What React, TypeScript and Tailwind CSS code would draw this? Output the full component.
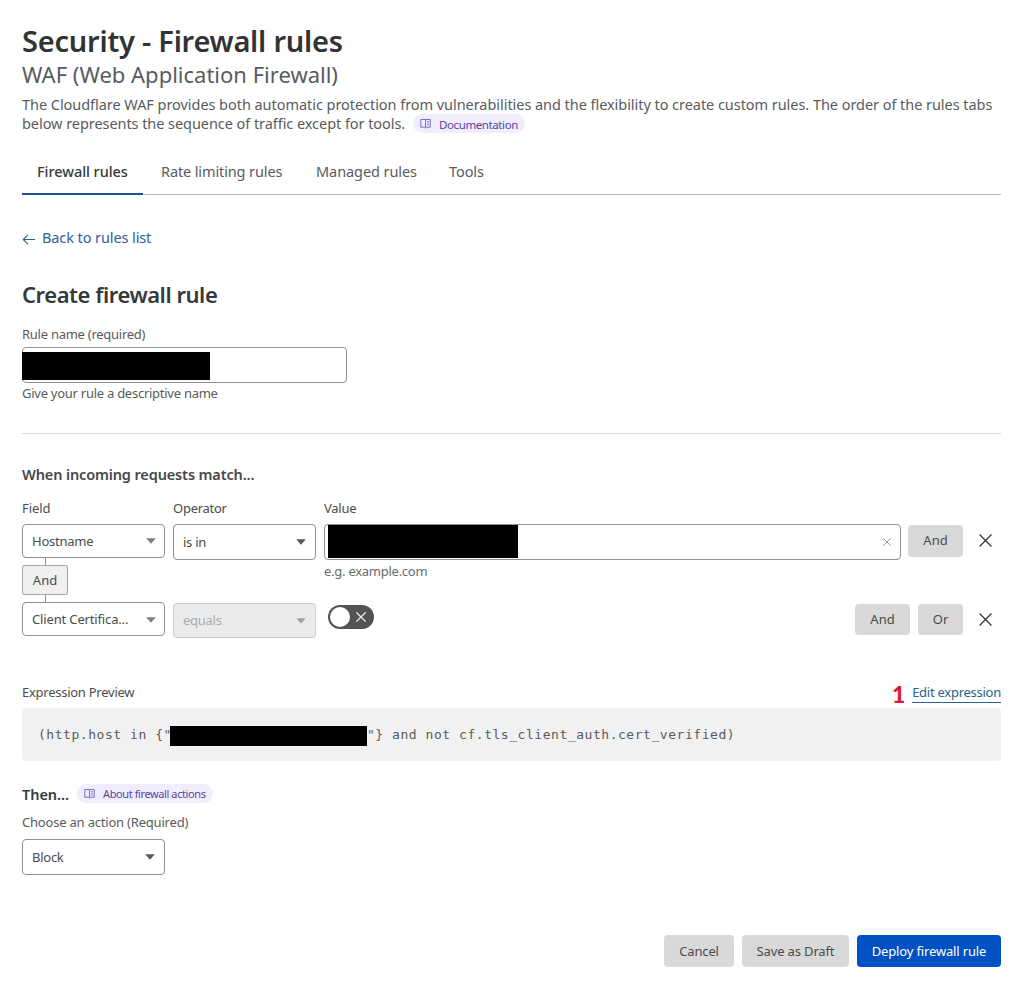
import type { ReactNode } from 'react';

const tabs = [
  { label: 'Firewall rules', active: true, className: 'w-[121px] pl-[15px] tracking-[-0.05px]' },
  { label: 'Rate limiting rules', active: false, className: 'w-[156px] pl-[18px] tracking-[-0.12px]' },
  { label: 'Managed rules', active: false, className: 'w-[132px] pl-[17px] tracking-[-0.08px]' },
  { label: 'Tools', active: false, className: 'pl-[18px] tracking-[-0.08px]' },
];

function BookIcon() {
  return (
    <svg width="11" height="11" viewBox="0 0 11 11" fill="none" stroke="#7a6bd0" strokeWidth="1" className="shrink-0">
      <path d="M5.5 1.5H.8v7.7h3.4l1.3.9 1.3-.9h3.4V1.5H5.5zM5.5 1.5v8" />
      <path d="M7 3.5h2M7 5.2h2M7 6.9h2" strokeWidth=".8" />
    </svg>
  );
}

function Pill({ children, className }: { children: ReactNode; className: string }) {
  return (
    <a href="#" className={`inline-flex items-center h-[19px] rounded-full bg-[#f1edfd] pl-[7px] text-[#5547a0] whitespace-nowrap ${className}`}>
      <BookIcon />
      <span className="ml-2 pt-px">{children}</span>
    </a>
  );
}

function CloseIcon({ size, color, width = 1.1 }: { size: number; color: string; width?: number }) {
  return (
    <svg width={size} height={size} viewBox="0 0 12 12" fill="none" stroke={color} strokeWidth={width}>
      <path d="M.5.5l11 11M11.5.5l-11 11" />
    </svg>
  );
}

function Select({ label, className, caret = 'text-[#55585a]' }: { label: string; className: string; caret?: string }) {
  return (
    <button className={`flex items-center justify-between w-[143px] shrink-0 rounded border pl-[9px] text-left whitespace-nowrap ${className}`}>
      <span className="pt-px">{label}</span>
      <svg width="10" height="6" viewBox="0 0 10 6" className={caret} fill="currentColor">
        <path d="M.2.3h9.6L5 5.8z" />
      </svg>
    </button>
  );
}

function GrayButton({ label, className }: { label: string; className: string }) {
  return (
    <button className={`shrink-0 rounded bg-[#d9d9d9] text-center text-[#4a4c4e] whitespace-nowrap ${className}`}>
      {label}
    </button>
  );
}

export default function App() {
  return (
    <div className="h-[989px] w-[1024px] overflow-hidden bg-white pl-[22px] pr-[23px] pt-6 font-['Noto_Sans','Open_Sans',sans-serif] text-[13px] tracking-[-0.26px] text-[#4a4c4e]">
      <header>
        <h1 className="h-[37px] text-[29px] leading-[34px] font-semibold tracking-[-0.23px] text-[#313335] whitespace-nowrap">
          Security - Firewall rules
        </h1>
        <p className="h-[33px] text-[22px] leading-[26px] tracking-[0px] text-[#595b5e] whitespace-nowrap">
          WAF (Web Application Firewall)
        </p>
        <div className="h-[55px] pt-px text-[14.5px] leading-[19px] text-[#595b5e] whitespace-nowrap">
          <p className="tracking-[-0.05px]">
            The Cloudflare WAF provides both automatic protection from vulnerabilities and the flexibility to create custom rules. The order of the rules tabs
          </p>
          <div className="flex items-center">
            <span className="w-[391px] tracking-[-0.06px]">below represents the sequence of traffic except for tools.</span>
            <Pill className="w-[112px] text-[11.5px] tracking-[-0.4px]">Documentation</Pill>
          </div>
        </div>
      </header>

      <nav className="mt-px flex h-[45px] border-b border-[#b9bbbd] text-[14.5px] leading-[42px] whitespace-nowrap">
        {tabs.map((tab) => (
          <a
            key={tab.label}
            href="#"
            className={`h-[45px] ${tab.active ? 'border-b-2 border-[#1d5296] font-medium text-[#36393a]' : 'text-[#595b5e]'} ${tab.className}`}
          >
            {tab.label}
          </a>
        ))}
      </nav>

      <a href="#" className="mt-[33px] flex h-5 items-center text-[14.5px] tracking-[-0.1px] text-[#2c5f95] whitespace-nowrap">
        <svg width="13" height="11" viewBox="0 0 13 11" fill="none" stroke="currentColor" strokeWidth="1.1" className="mt-[3px] mr-[7px]">
          <path d="M13 5.5H1.2M6 .8L1.2 5.5 6 10.2" />
        </svg>
        Back to rules list
      </a>

      <h2 className="mt-[31px] h-[45px] text-[22px] leading-[30px] font-semibold tracking-[-0.45px] text-[#36393a] whitespace-nowrap">
        Create firewall rule
      </h2>
      <label className="block h-[23px] leading-5 text-[#595b5e]">Rule name (required)</label>
      <div className="flex h-9 w-[325px] rounded border border-[#8e9092] pt-1">
        <div className="-ml-px h-7 w-[188px] bg-black" />
      </div>
      <p className="h-[50px] leading-5 text-[#595b5e]">Give your rule a descriptive name</p>
      <hr className="border-[#d9d9d9]" />

      <section className="mt-[30px]">
        <h3 className="h-[34px] text-[14.5px] leading-5 font-semibold tracking-[-0.13px] text-[#45484a] whitespace-nowrap">
          When incoming requests match...
        </h3>
        <div className="flex h-[26px] gap-2 leading-5">
          <span className="w-[143px] tracking-[-0.1px]">Field</span>
          <span className="w-[143px]">Operator</span>
          <span>Value</span>
        </div>

        <div className="flex h-[78px] items-start">
          <div>
            <Select label="Hostname" className="h-[34px] border-[#8e9092] pr-2 tracking-[-0.25px]" caret="text-[#7c7e80]" />
            <div className="ml-[23px] h-[7px] w-px bg-[#8e9092]" />
            <div className="h-[30px] w-[46px] rounded-xs border border-[#a5a7a9] bg-[#f0f0f0] text-center leading-[29px] tracking-normal">And</div>
            <div className="ml-[23px] h-[7px] w-px bg-[#8e9092]" />
          </div>
          <Select label="is in" className="ml-2 h-9 border-[#8e9092] pr-[9px]" />
          <div className="ml-2 w-[577px]">
            <div className="flex h-9 items-center justify-between rounded border border-[#8e9092] pr-[9px] pl-[3px]">
              <div className="-mt-[2px] h-[33px] w-[190px] bg-black" />
              <CloseIcon size={8} color="#8e9092" width={1.4} />
            </div>
            <p className="leading-[23px] text-[#6a6c6e]">e.g. example.com</p>
          </div>
          <GrayButton label="And" className="mt-px ml-[7px] h-8 w-[55px] tracking-normal" />
          <button className="mt-[10px] ml-4"><CloseIcon size={13} color="#2f3133" /></button>
        </div>

        <div className="flex h-[80px] items-start">
          <Select label="Client Certifica..." className="h-[34px] border-[#8e9092] pt-px pr-2 tracking-[-0.15px]" caret="text-[#7c7e80]" />
          <Select label="equals" className="mt-px ml-2 h-[35px] border-[#c9cbcc] bg-[#ebebeb] pr-[9px] text-[#a9abad]" caret="text-[#a0a2a3]" />
          <button className="mt-[3px] ml-3 flex h-6 w-[46px] items-center justify-between rounded-full bg-[#515355] pr-2 pl-[2px]">
            <span className="size-5 rounded-full bg-white" />
            <CloseIcon size={10} color="#e8e8e8" width={1.5} />
          </button>
          <GrayButton label="And" className="mt-[2px] ml-auto h-[31px] w-[55px] pt-px tracking-normal" />
          <GrayButton label="Or" className="mt-[2px] ml-2 h-[31px] w-[45px] pt-px tracking-normal" />
          <button className="mt-[11px] mr-[9px] ml-4"><CloseIcon size={13} color="#2f3133" /></button>
        </div>
      </section>

      <section>
        <div className="flex h-[26px] items-start leading-5 whitespace-nowrap">
          <span>Expression Preview</span>
          <span className="mt-[2px] mr-[7px] ml-auto font-['Lato',sans-serif] text-[23px] leading-5 font-black text-[#d3222f]">1</span>
          <a href="#" className="h-[21px] border-b border-[#2c5f95] text-[#2c5f95]">Edit expression</a>
        </div>
        <div className="flex h-[53px] items-center rounded bg-[#f1f1f1] pl-4 font-['DejaVu_Sans_Mono',monospace] text-[13px] tracking-[0.54px] text-[#595b5e] whitespace-pre">
          <span className="w-[132px]">{'(http.host in {"'}</span>
          <span className="z-10 mt-[2px] h-5 w-[197px] shrink-0 bg-black" />
          <span>{'"} and not cf.tls_client_auth.cert_verified)'}</span>
        </div>
      </section>

      <section className="mt-[23px]">
        <div className="flex h-[28px] items-start">
          <h3 className="w-[55px] text-[14.5px] leading-5 font-semibold tracking-[-0.05px] text-[#36393a]">Then...</h3>
          <Pill className="w-[136px] text-[11px] tracking-[-0.4px]">About firewall actions</Pill>
        </div>
        <label className="block h-[27px] leading-5 tracking-[-0.2px] text-[#595b5e]">Choose an action (Required)</label>
        <Select label="Block" className="h-9 border-[#8e9092] pr-[9px]" />
      </section>

      <footer className="mt-[60px] flex justify-end gap-2 tracking-[-0.15px]">
        <GrayButton label="Cancel" className="h-8 w-[70px] pt-px" />
        <GrayButton label="Save as Draft" className="h-8 w-[107px] pt-px" />
        <button className="h-8 w-[144px] rounded bg-[#0051c3] pt-px text-white whitespace-nowrap">Deploy firewall rule</button>
      </footer>
    </div>
  );
}
